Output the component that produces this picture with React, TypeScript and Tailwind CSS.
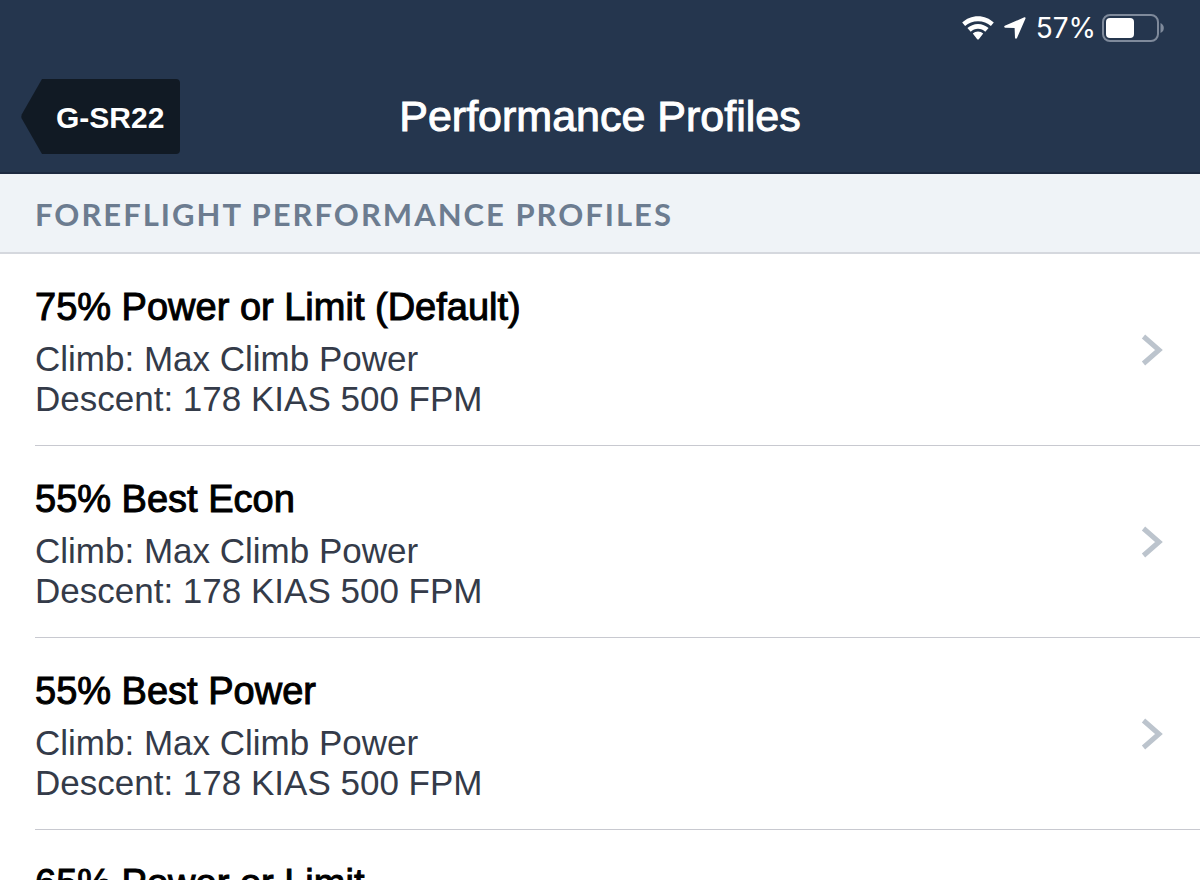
import React from "react";

interface IProfile {
  id: string;
  name: string;
  climb: string;
  descent: string;
}

const profiles: IProfile[] = [
  {
    id: "75-limit",
    name: "75% Power or Limit (Default)",
    climb: "Max Climb Power",
    descent: "178 KIAS 500 FPM",
  },
  {
    id: "55-econ",
    name: "55% Best Econ",
    climb: "Max Climb Power",
    descent: "178 KIAS 500 FPM",
  },
  {
    id: "55-power",
    name: "55% Best Power",
    climb: "Max Climb Power",
    descent: "178 KIAS 500 FPM",
  },
  {
    id: "65-limit",
    name: "65% Power or Limit",
    climb: "Max Climb Power",
    descent: "178 KIAS 500 FPM",
  },
];

function StatusBar() {
  return (
    <div className="flex h-14 items-center justify-end pr-9 text-white">
      <svg width="32" height="25" viewBox="0 0 32 25" fill="currentColor">
        <path d="M16 0.3C9.9 0.3 4.3 2.7 0.2 6.6L3.1 9.9C6.5 6.9 11 5.2 16 5.2S25.5 6.9 28.9 9.9L31.8 6.6C27.7 2.7 22.1 0.3 16 0.3Z" />
        <path d="M16 7.9C11.9 7.9 8.2 9.5 5.4 12.1L8.7 15.7C10.6 13.9 13.2 12.8 16 12.8S21.4 13.9 23.3 15.7L26.6 12.1C23.8 9.5 20.1 7.9 16 7.9Z" />
        <path d="M16 15.5C14 15.5 12.2 16.3 10.8 17.6L15 22.9Q16 24.3 17 22.9L21.2 17.6C19.8 16.3 18 15.5 16 15.5Z" />
      </svg>
      <svg
        className="ml-2.5"
        width="22"
        height="22"
        viewBox="0 0 22 22"
        fill="currentColor"
      >
        <path d="M20.4 0.3L0.8 8.8C-0.2 9.3 0 10.6 1.1 10.7L10.6 11.1L11 20.7C11.1 21.8 12.5 22 13 21L21.5 1.5C21.8 0.7 21.2 0 20.4 0.3Z" />
      </svg>
      <span className="ml-2.5 font-[Inter,sans-serif] text-[28px] leading-8">
        57%
      </span>
      <svg className="ml-1.5" width="62" height="28" viewBox="0 0 62 28">
        <rect
          x="1"
          y="1"
          width="55"
          height="26"
          rx="7"
          fill="none"
          stroke="#7f8a9b"
          strokeWidth="2"
        />
        <rect x="4" y="4" width="28" height="20" rx="4" fill="#ffffff" />
        <path d="M58.5 9C60.9 10 61.8 12 61.8 14S60.9 18 58.5 19Z" fill="#7f8a9b" />
      </svg>
    </div>
  );
}

function BackButton() {
  return (
    <button
      type="button"
      className="flex h-[75px] items-stretch justify-self-start text-[30px] font-bold text-white"
    >
      <svg width="21" height="75" viewBox="0 0 21 75" fill="#111a24">
        <path d="M21 0L0.7 35.5Q0 37.5 0.7 39.5L21 75Z" />
      </svg>
      <span className="flex items-center rounded-r bg-[#111a24] pt-0.5 pr-4 pl-3.5">
        G-SR22
      </span>
    </button>
  );
}

function ProfileRow({ profile }: { profile: IProfile }) {
  return (
    <li className="border-b border-[#c8c9d0]">
      <button
        type="button"
        className="flex h-[191px] w-full items-center justify-between pr-[37px] text-left"
      >
        <span className="flex flex-col pt-0.5">
          <span className="mb-2 text-[38px] leading-12 text-black [-webkit-text-stroke:1px_black]">
            {profile.name}
          </span>
          <span className="text-[35px] leading-10 text-[#343b49]">
            Climb: {profile.climb}
          </span>
          <span className="text-[35px] leading-10 text-[#343b49]">
            Descent: {profile.descent}
          </span>
        </span>
        <svg
          width="22"
          height="32"
          viewBox="0 0 22 32"
          fill="none"
          stroke="#bcc4cd"
          strokeWidth="5"
        >
          <path d="M2.5 2.5L18 16L2.5 29.5" />
        </svg>
      </button>
    </li>
  );
}

export default function App() {
  return (
    <div className="h-screen overflow-y-auto bg-white font-['Liberation_Sans',Arial,sans-serif] [scrollbar-width:none]">
      <header className="border-b-2 border-[#1d2a40] bg-[#25364e]">
        <StatusBar />
        <div className="grid h-[116px] grid-cols-[1fr_auto_1fr] items-center px-[21px] pt-1">
          <BackButton />
          <h1 className="text-[43px] text-white [-webkit-text-stroke:1px_white]">
            Performance Profiles
          </h1>
        </div>
      </header>
      <main>
        <h2 className="flex h-20 items-center border-b-2 border-[#d5d8de] bg-[#eff3f7] pt-0.5 pl-[35px] font-[Lato,sans-serif] text-[31px] font-bold tracking-[2px] text-[#6c7c90]">
          FOREFLIGHT PERFORMANCE PROFILES
        </h2>
        <ul className="pl-[35px]">
          {profiles.map((profile) => (
            <ProfileRow key={profile.id} profile={profile} />
          ))}
        </ul>
      </main>
    </div>
  );
}
